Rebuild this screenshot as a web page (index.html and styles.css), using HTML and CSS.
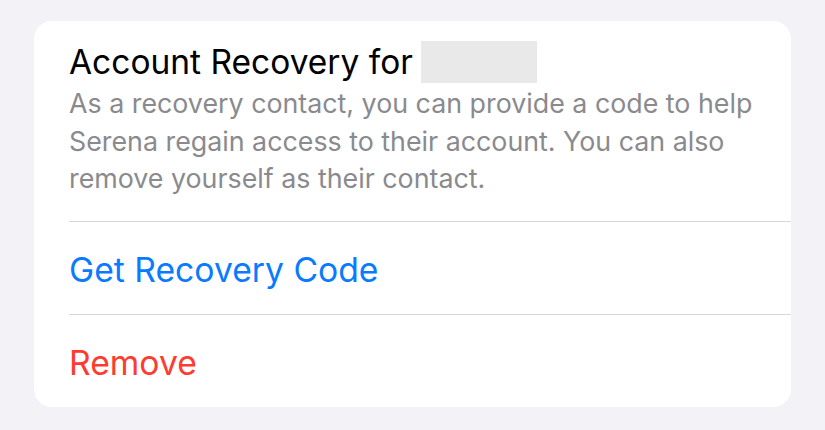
FILE: index.html
```html
<!DOCTYPE html>
<html lang="en">
<head>
  <meta charset="UTF-8">
  <meta name="viewport" content="width=device-width, initial-scale=1.0">
  <title>Account Recovery</title>
  <link rel="stylesheet" href="styles.css">
</head>
<body>
  <div class="card">
    <div class="header">
      <div class="title">Account Recovery for <span class="blur"></span></div>
      <p class="desc">As a recovery contact, you can provide a code to help Serena regain access to their account. You can also remove yourself as their contact.</p>
    </div>
    <div class="row blue">Get Recovery Code</div>
    <div class="row red">Remove</div>
  </div>
</body>
</html>
```

FILE: styles.css
```css
body {
  margin: 0;
  padding: 21px 34px;
  background: #f2f2f7;
  font-family: Inter, "Noto Sans", sans-serif;
}
.card {
  width: 757px;
  background: #fff;
  border-radius: 18px;
  padding-left: 35px;
  box-sizing: border-box;
}
.header {
  padding: 20px 16px 23px 0;
}
.title {
  display: flex;
  align-items: center;
  gap: 8px;
  font-size: 33.5px;
  line-height: 42px;
  color: #000;
}
.blur {
  display: inline-block;
  width: 116px;
  height: 42px;
  background: #e9e9e9;
}
.desc {
  margin: 2px 0 0;
  font-size: 26.8px;
  line-height: 37.5px;
  color: #8a8a8e;
}
.row {
  height: 93px;
  box-sizing: border-box;
  padding-top: 4px;
  border-top: 1px solid #d8d8da;
  display: flex;
  align-items: center;
  font-size: 33.7px;
}
.blue {
  color: #0a7aff;
}
.red {
  color: #ff3b30;
}
```
